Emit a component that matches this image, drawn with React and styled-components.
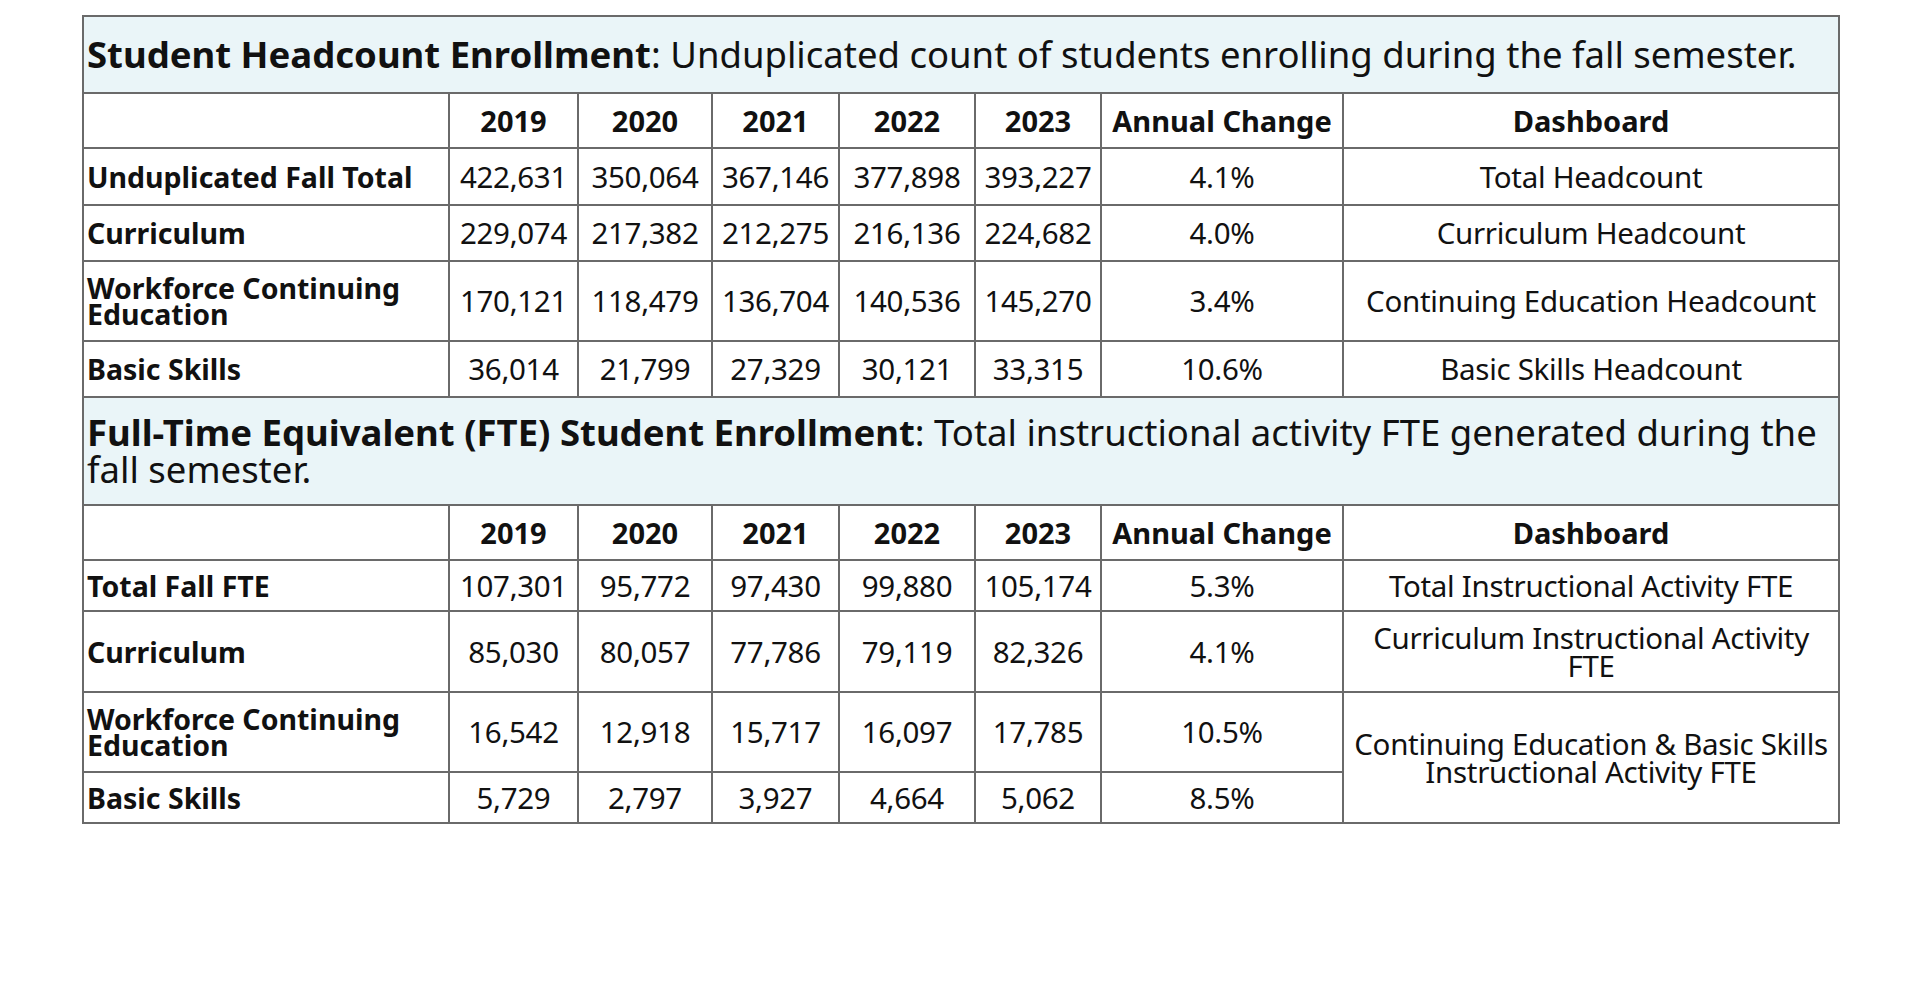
import React from 'react'
import styled, { createGlobalStyle } from 'styled-components'

const GlobalStyle = createGlobalStyle`
  body {
    margin: 0;
    background: #ffffff;
    font-family: "Noto Sans", "Open Sans", sans-serif;
    color: #111;
  }
`

const Page = styled.div`
  padding: 15px 0 0 82px;
`

const Table = styled.table`
  width: 1756px;
  border-collapse: collapse;
  table-layout: fixed;
`

const Row = styled.tr`
  height: ${(p) => p.h}px;
`

const Banner = styled.td`
  background: #eaf5f8;
  border: 2px solid #6a6a6a;
  padding: 0 3px;
  font-size: 36.5px;
  line-height: 37px;
  vertical-align: middle;
  b {
    font-weight: 700;
  }
`

const Head = styled.th`
  border: 2px solid #6a6a6a;
  font-size: 29px;
  font-weight: 700;
  text-align: center;
  vertical-align: middle;
  padding: 0;
`

const Label = styled.td`
  border: 2px solid #6a6a6a;
  font-size: 28.5px;
  font-weight: 700;
  line-height: 26px;
  padding: 0 3px;
  vertical-align: middle;
`

const Cell = styled.td`
  border: 2px solid #6a6a6a;
  font-size: 29.5px;
  font-weight: 400;
  text-align: center;
  vertical-align: middle;
  padding: 0 2px;
  line-height: ${(p) => (p.tight ? '28px' : '32px')};
  letter-spacing: -0.3px;
`

const years = ['2019', '2020', '2021', '2022', '2023']
const widths = [366, 129, 134, 127, 136, 126, 242, 496]

const headcount = [
  { label: 'Unduplicated Fall Total', vals: ['422,631', '350,064', '367,146', '377,898', '393,227'], change: '4.1%', dash: 'Total Headcount', h: 57 },
  { label: 'Curriculum', vals: ['229,074', '217,382', '212,275', '216,136', '224,682'], change: '4.0%', dash: 'Curriculum Headcount', h: 56 },
  { label: 'Workforce Continuing Education', vals: ['170,121', '118,479', '136,704', '140,536', '145,270'], change: '3.4%', dash: 'Continuing Education Headcount', h: 80 },
  { label: 'Basic Skills', vals: ['36,014', '21,799', '27,329', '30,121', '33,315'], change: '10.6%', dash: 'Basic Skills Headcount', h: 56 },
]

const fte = [
  { label: 'Total Fall FTE', vals: ['107,301', '95,772', '97,430', '99,880', '105,174'], change: '5.3%', dash: 'Total Instructional Activity FTE', h: 51 },
  { label: 'Curriculum', vals: ['85,030', '80,057', '77,786', '79,119', '82,326'], change: '4.1%', dash: 'Curriculum Instructional Activity FTE', h: 81 },
  { label: 'Workforce Continuing Education', vals: ['16,542', '12,918', '15,717', '16,097', '17,785'], change: '10.5%', dash: 'Continuing Education & Basic Skills Instructional Activity FTE', span: 2, h: 80 },
  { label: 'Basic Skills', vals: ['5,729', '2,797', '3,927', '4,664', '5,062'], change: '8.5%', h: 51 },
]

const HeaderRow = () => (
  <Row h={55}>
    <Head />
    {years.map((y) => (
      <Head key={y}>{y}</Head>
    ))}
    <Head>Annual Change</Head>
    <Head>Dashboard</Head>
  </Row>
)

const DataRow = ({ r }) => (
  <Row h={r.h}>
    <Label>{r.label}</Label>
    {r.vals.map((v, i) => (
      <Cell key={i}>{v}</Cell>
    ))}
    <Cell>{r.change}</Cell>
    {r.dash && (
      <Cell rowSpan={r.span || 1} tight>
        {r.dash}
      </Cell>
    )}
  </Row>
)

export default function App() {
  return (
    <>
      <GlobalStyle />
      <Page>
        <Table>
          <colgroup>
            {widths.map((w, i) => (
              <col key={i} style={{ width: w }} />
            ))}
          </colgroup>
          <tbody>
            <Row h={77}>
              <Banner colSpan={8}>
                <b>Student Headcount Enrollment</b>: Unduplicated count of students enrolling during the fall semester.
              </Banner>
            </Row>
            <HeaderRow />
            {headcount.map((r) => (
              <DataRow key={r.label} r={r} />
            ))}
            <Row h={108}>
              <Banner colSpan={8}>
                <b>Full-Time Equivalent (FTE) Student Enrollment</b>: Total instructional activity FTE generated during the fall semester.
              </Banner>
            </Row>
            <HeaderRow />
            {fte.map((r) => (
              <DataRow key={r.label} r={r} />
            ))}
          </tbody>
        </Table>
      </Page>
    </>
  )
}
